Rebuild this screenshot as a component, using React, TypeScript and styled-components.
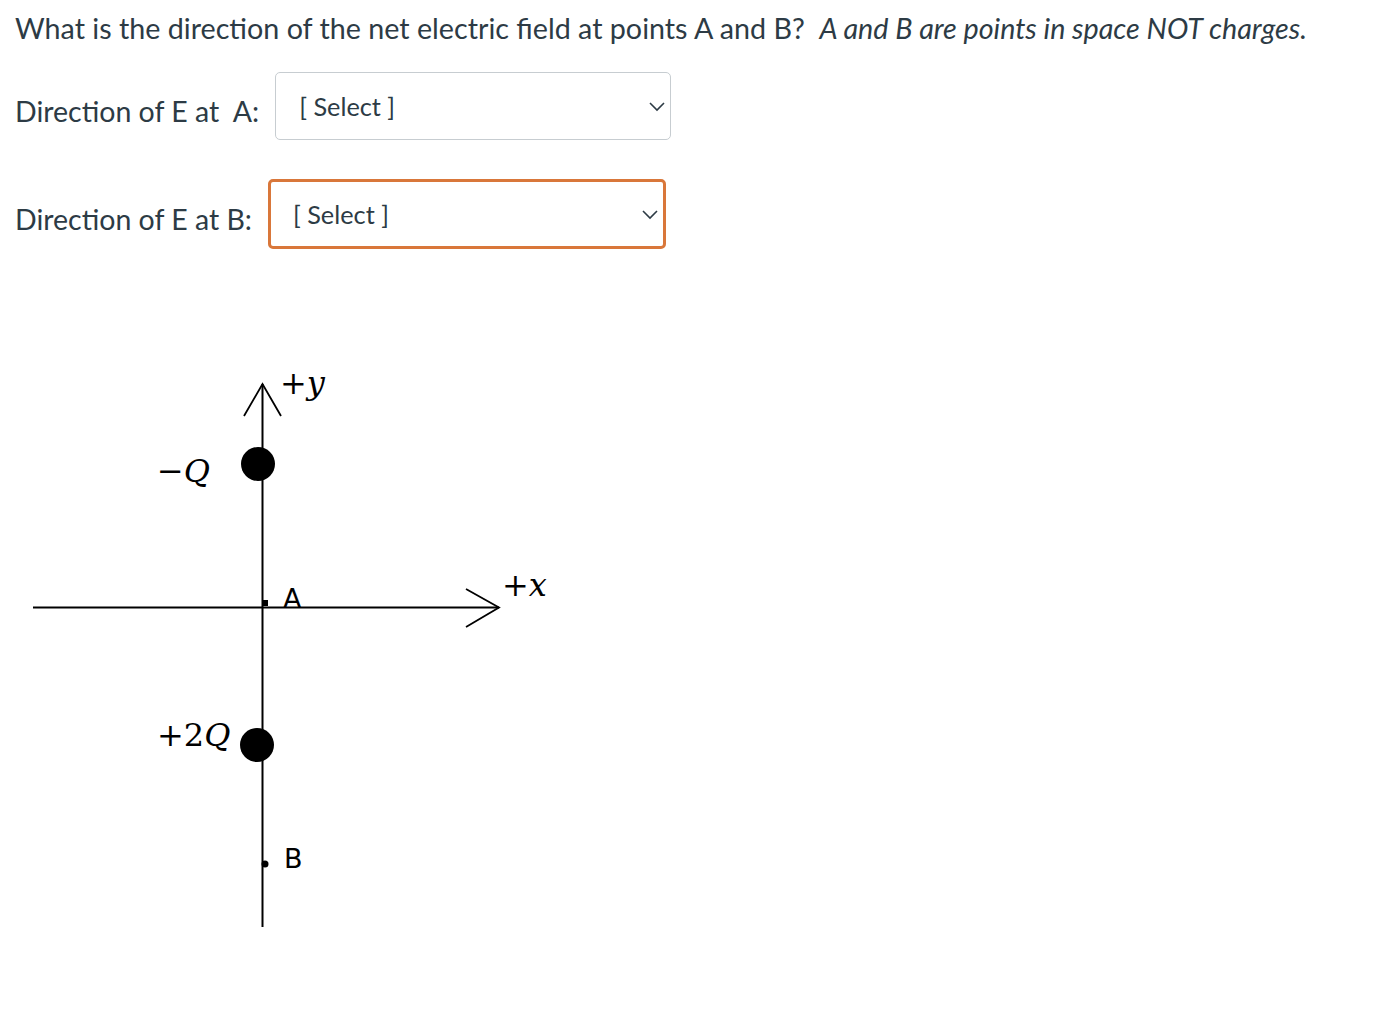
import React from "react";
import styled, { createGlobalStyle } from "styled-components";

const Global = createGlobalStyle`
  html, body { margin: 0; padding: 0; background: #ffffff; }
  body { font-family: Lato, "Open Sans", sans-serif; color: #2d3b45; }
`;

const Page = styled.div`
  padding: 8px 15px 0 15px;
`;

const Question = styled.p`
  margin: 0;
  font-size: 28.7px;
  line-height: 40px;
  white-space: pre;
`;

const Rows = styled.div`
  display: flex;
  flex-direction: column;
  gap: 39px;
  margin-top: 24px;
`;

const Row = styled.div`
  display: flex;
  align-items: center;
  gap: 16px;
`;

const Label = styled.span`
  font-size: 28.5px;
  white-space: pre;
  margin-top: 10px;
`;

const SelectWrap = styled.div<{ $width: number; $focused?: boolean }>`
  position: relative;
  width: ${(p) => p.$width}px;
  height: ${(p) => (p.$focused ? 70 : 68)}px;
  box-sizing: border-box;
  border: ${(p) => (p.$focused ? "3px solid #d9773a" : "1px solid #c7cdd1")};
  border-radius: 5px;
  background: #fff;
`;

const Select = styled.select<{ $pad: number }>`
  appearance: none;
  -webkit-appearance: none;
  border: none;
  outline: none;
  background: transparent;
  width: 100%;
  height: 100%;
  padding: 0 40px 0 ${(p) => p.$pad}px;
  font-family: Lato, "Open Sans", sans-serif;
  font-size: 25.3px;
  color: #2d3b45;
  box-sizing: border-box;
`;

const Chevron = styled.svg`
  position: absolute;
  right: 4px;
  top: 50%;
  margin-top: -6px;
  pointer-events: none;
`;

const Diagram = styled.svg`
  display: block;
  margin-top: 111px;
  margin-left: -15px;
`;

const MathText = styled.text`
  font-family: "DejaVu Serif", "Liberation Serif", serif;
  font-style: italic;
  fill: #000;
`;

const SansText = styled.text`
  font-family: "DejaVu Sans", "Liberation Sans", sans-serif;
  fill: #000;
`;

function Dropdown({ width, pad, focused }: { width: number; pad: number; focused?: boolean }) {
  return (
    <SelectWrap $width={width} $focused={focused}>
      <Select $pad={pad} defaultValue="">
        <option value="">[ Select ]</option>
        <option value="+x">+x</option>
        <option value="-x">-x</option>
        <option value="+y">+y</option>
        <option value="-y">-y</option>
        <option value="zero">zero</option>
      </Select>
      <Chevron width="18" height="12" viewBox="0 0 18 12">
        <path d="M2 3 L9 10 L16 3" fill="none" stroke="#2d3b45" strokeWidth="1.6" />
      </Chevron>
    </SelectWrap>
  );
}

export default function App() {
  return (
    <>
      <Global />
      <Page>
        <Question>
          What is the direction of the net electric field at points A and B?{"  "}
          <em>A and B are points in space NOT charges.</em>
        </Question>
        <Rows>
          <Row>
            <Label>Direction of E at  A:</Label>
            <Dropdown width={396} pad={23} />
          </Row>
          <Row>
            <Label>Direction of E at B:</Label>
            <Dropdown width={398} pad={22} focused />
          </Row>
        </Rows>
        <Diagram width="600" height="600" viewBox="0 360 600 600">
          {/* vertical axis */}
          <line x1="262.5" y1="384" x2="262.5" y2="927" stroke="#000" strokeWidth="2" />
          <polyline points="244,416 262.5,384 281,416" fill="none" stroke="#000" strokeWidth="1.8" />
          {/* horizontal axis */}
          <line x1="33" y1="607.5" x2="499" y2="607.5" stroke="#000" strokeWidth="2" />
          <polyline points="466,589 499,607.5 466,627" fill="none" stroke="#000" strokeWidth="1.8" />
          {/* charges */}
          <circle cx="258" cy="464" r="17" fill="#000" />
          <circle cx="257" cy="745" r="17" fill="#000" />
          {/* points */}
          <rect x="263" y="600" width="5" height="6" fill="#000" />
          <circle cx="265" cy="864" r="3.5" fill="#000" />
          {/* labels */}
          <MathText x="280" y="394" fontSize="32">
            <tspan fontStyle="normal">+</tspan>y
          </MathText>
          <MathText x="157" y="482" fontSize="32">
            <tspan fontStyle="normal">−</tspan>Q
          </MathText>
          <MathText x="502" y="596" fontSize="32">
            <tspan fontStyle="normal">+</tspan>x
          </MathText>
          <MathText x="157" y="746" fontSize="32">
            <tspan fontStyle="normal">+2</tspan>Q
          </MathText>
          <SansText x="283" y="608" fontSize="27">A</SansText>
          <SansText x="284" y="868" fontSize="27">B</SansText>
        </Diagram>
      </Page>
    </>
  );
}
